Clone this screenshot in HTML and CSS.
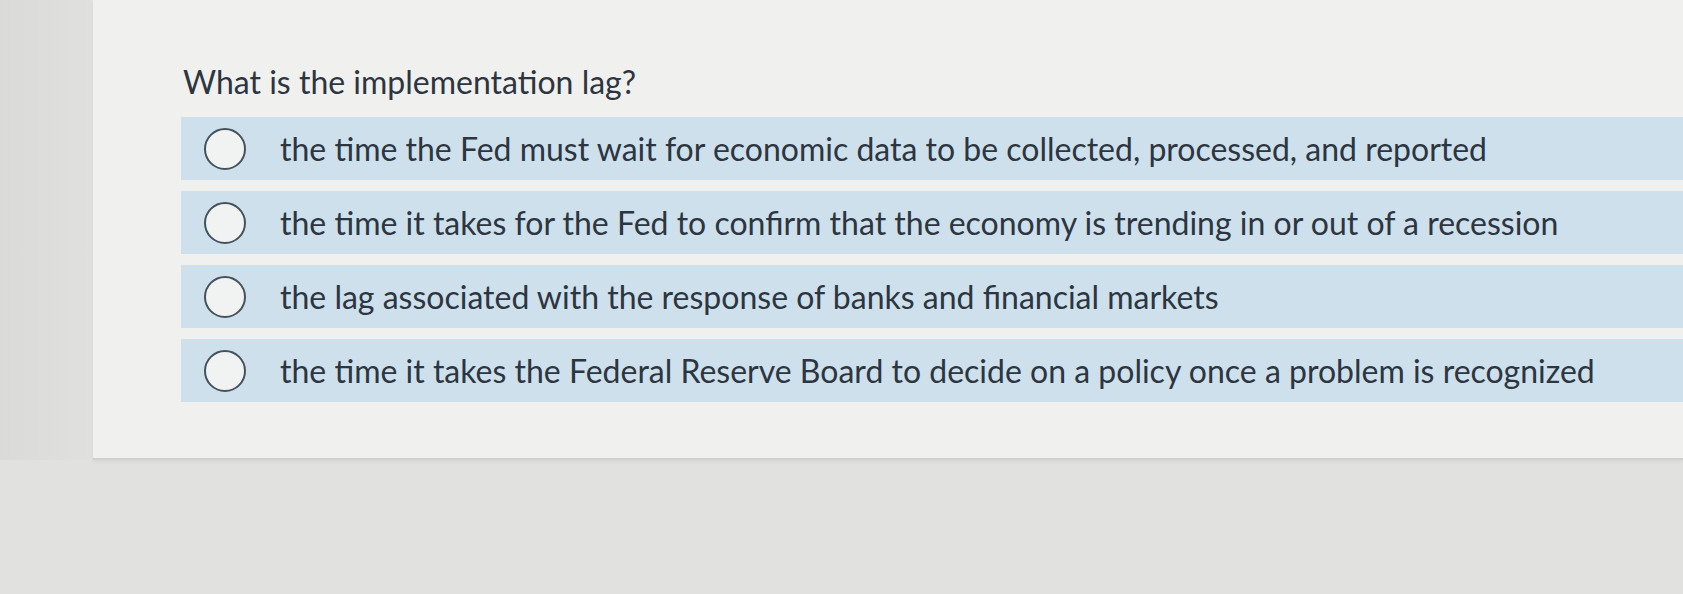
FILE: index.html
```html
<!DOCTYPE html>
<html>
<head>
<meta charset="utf-8">
<link rel="stylesheet" href="styles.css">
</head>
<body>
<div class="page">
  <div class="card">
    <div class="question">What is the implementation lag?</div>
    <div class="options">
      <div class="option"><span class="radio"></span><span class="label">the time the Fed must wait for economic data to be collected, processed, and reported</span></div>
      <div class="option"><span class="radio"></span><span class="label">the time it takes for the Fed to confirm that the economy is trending in or out of a recession</span></div>
      <div class="option"><span class="radio"></span><span class="label">the lag associated with the response of banks and financial markets</span></div>
      <div class="option"><span class="radio"></span><span class="label">the time it takes the Federal Reserve Board to decide on a policy once a problem is recognized</span></div>
    </div>
  </div>
</div>
</body>
</html>
```
FILE: styles.css
```css
html, body {
  margin: 0;
  padding: 0;
}
body {
  background: #e1e1df;
  font-family: Lato, "Open Sans", sans-serif;
  color: #2c3540;
  width: 1683px;
  height: 594px;
  overflow: hidden;
}
.page {
  padding-left: 93px;
  background: linear-gradient(to right, #dadad8 0, #e0e0de 93px, #e1e1df 93px);
}
.card {
  background: #f0f0ee;
  height: 460px;
  box-sizing: border-box;
  padding: 63px 0 0 88px;
  border-bottom: 2px solid #d0d0ce;
  box-shadow: 0 2px 3px rgba(0,0,0,0.05);
}
.question {
  font-size: 32px;
  line-height: 38px;
  margin-left: 2px;
}
.options {
  margin-top: 16px;
  display: flex;
  flex-direction: column;
  gap: 11px;
}
.option {
  background: #cde0ec;
  height: 63px;
  display: flex;
  align-items: center;
}
.radio {
  width: 42px;
  height: 42px;
  border: 2.5px solid #44525e;
  border-radius: 50%;
  background: #f1f2f2;
  margin-left: 23px;
  flex: none;
  box-sizing: border-box;
}
.label {
  margin-left: 34px;
  font-size: 32px;
  line-height: 38px;
  white-space: nowrap;
}
```
